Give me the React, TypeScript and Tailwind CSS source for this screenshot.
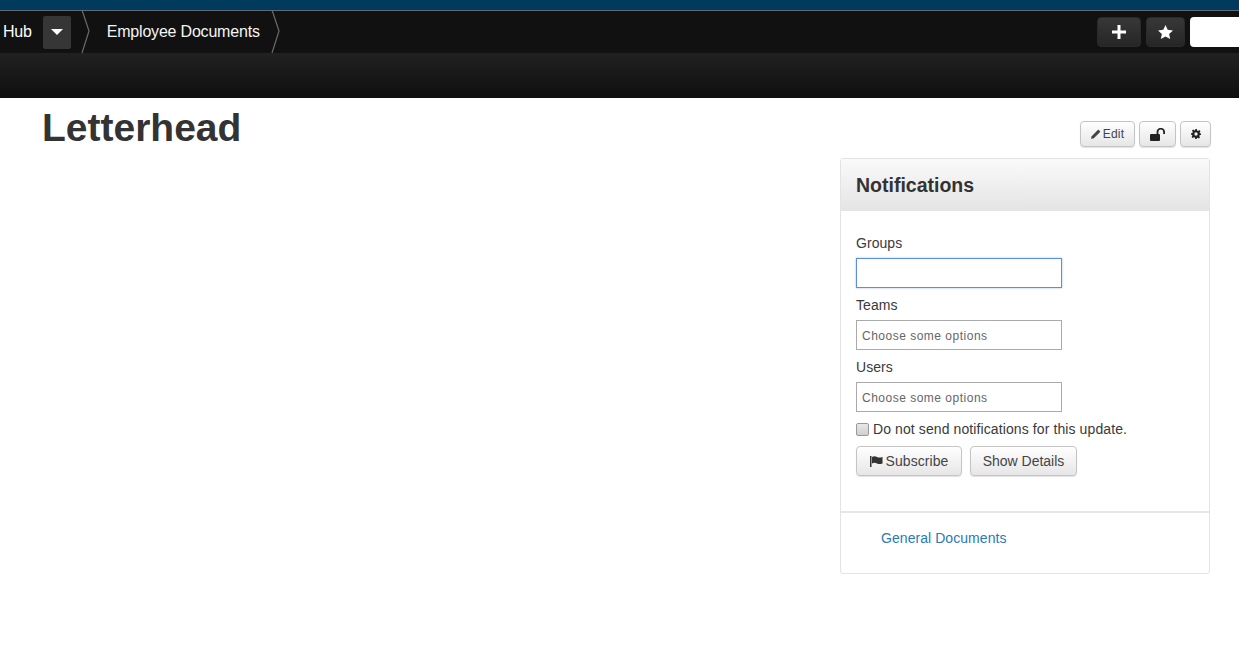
import React from 'react';

const btn = 'flex items-center justify-center rounded-[4px] border border-[#c4c4c4] bg-gradient-to-b from-white to-[#e6e6e6] shadow-[0_1px_1px_rgba(0,0,0,0.12)] text-[#444]';
const navBtn = 'flex h-[30px] items-center justify-center rounded-[4px] border border-[#2a2a2a] bg-gradient-to-b from-[#383838] to-[#262626] text-white';

const Chevron = () => (
  <svg width="9" height="44" viewBox="0 0 9 44" className="shrink-0">
    <path d="M1 0 L8 21 L1 43" fill="none" stroke="#6b6b6b" strokeWidth="1.2" />
  </svg>
);

const SelectField = ({ label, placeholder }: { label: string; placeholder: string }) => (
  <div>
    <div className="mb-[5px] text-[14px] leading-[20px] tracking-[0.06px] text-[#3a3a3a]">{label}</div>
    <div className="flex h-[30px] w-[206px] items-center border border-[#aaa] bg-white pl-[5px] pt-[2px] text-[12px] tracking-[0.5px] text-[#666]">
      {placeholder}
    </div>
  </div>
);

export default function App() {
  return (
    <div className="h-[668px] overflow-hidden bg-white font-['Liberation_Sans',Arial,sans-serif]">
      {/* top strip */}
      <div className="h-[11px] border-b border-[#5f6b70] bg-[#003a5c]" />

      {/* nav row */}
      <div className="flex h-[42px] items-center bg-[#111111] pr-0 text-white">
        <span className="ml-[3px] text-[16px] tracking-[-0.2px]">Hub</span>
        <div className="ml-[11px] flex h-[33px] w-[28px] items-center justify-center rounded-[2px] bg-[#363636]">
          <div className="h-0 w-0 border-x-[6px] border-t-[6px] border-x-transparent border-t-white" />
        </div>
        <div className="ml-[10px]"><Chevron /></div>
        <span className="ml-[17px] text-[16px] tracking-[-0.2px] text-[#f5f5f5]">Employee Documents</span>
        <div className="ml-[11px]"><Chevron /></div>

        <div className="ml-auto flex items-center">
          <div className={`${navBtn} w-[44px]`}>
            <svg width="14" height="14" viewBox="0 0 14 14">
              <path d="M5.5 0h3v5.5H14v3H8.500V14h-3V8.500H0v-3h5.500z" fill="#fff" />
            </svg>
          </div>
          <div className={`${navBtn} ml-[5px] w-[39px]`}>
            <svg width="15" height="14" viewBox="0 0 15 14">
              <path d="M7.500 0l2.200 4.800 5.300.6-3.900 3.500 1.100 5.100-4.700-2.600-4.700 2.600 1.100-5.100L0 5.400l5.300-.6z" fill="#fff" />
            </svg>
          </div>
          <div className="ml-[5px] h-[30px] w-[49px] rounded-l-[4px] bg-white" />
        </div>
      </div>

      {/* sub bar */}
      <div className="h-[45px] bg-gradient-to-b from-[#212121] to-[#0f0f0f]" />

      {/* content */}
      <div className="flex justify-between pl-[42px] pr-[28px]">
        <h1 className="mt-[8px] text-[39px] font-bold leading-[44px] text-[#333]">Letterhead</h1>

        <div className="w-[371px]">
          <div className="mt-[23px] flex justify-end gap-[4px]">
            <div className={`${btn} h-[26px] w-[55px] gap-[2px] text-[12px] tracking-[0.2px]`}>
              <svg width="10" height="10" viewBox="0 0 10 10">
                <path d="M0 10l.7-2.800L7.300.6l2.100 2.100-6.600 6.600z" fill="#444" />
              </svg>
              Edit
            </div>
            <div className={`${btn} h-[26px] w-[37px]`}>
              <svg width="16" height="13" viewBox="0 0 16 13">
                <rect x="0" y="6" width="10" height="7" rx="1" fill="#222" />
                <path d="M7.500 6.500V4a3.300 3.300 0 0 1 6.600 0v2" fill="none" stroke="#222" strokeWidth="1.800" />
              </svg>
            </div>
            <div className={`${btn} h-[26px] w-[31px]`}>
              <svg width="10" height="10" viewBox="0 0 24 24">
                <path d="M10 0h4l.7 3.600 2.200.9 3-2 2.800 2.800-2 3 .9 2.200L24 10v4l-3.400.7-.9 2.200 2 3-2.800 2.800-3-2-2.200.9L14 24h-4l-.7-3.400-2.200-.9-3 2-2.800-2.800 2-3-.9-2.200L0 14v-4l3.400-.7.9-2.200-2-3 2.800-2.800 3 2 2.200-.9zM12 8a4 4 0 1 0 0 8 4 4 0 0 0 0-8z" fill="#222" fillRule="evenodd" />
              </svg>
            </div>
          </div>

          {/* notifications panel */}
          <div className="mt-[11px] mr-[1px] h-[416px] rounded-[3px] border border-[#e3e3e3] bg-white">
            <div className="flex h-[52px] items-center bg-gradient-to-b from-[#fafafa] to-[#e4e4e4] pl-[15px] pt-[2px] text-[19.500px] font-bold text-[#333]">
              Notifications
            </div>

            <div className="px-[15px] pt-[22px]">
              <div className="mb-[5px] text-[14px] leading-[20px] tracking-[0.06px] text-[#3a3a3a]">Groups</div>
              <div className="mb-[7px] h-[30px] w-[206px] border border-[#5b8fd8] bg-white shadow-[0_0_2px_rgba(82,130,210,0.5)]" />
              <SelectField label="Teams" placeholder="Choose some options" />
              <div className="mt-[7px]">
                <SelectField label="Users" placeholder="Choose some options" />
              </div>

              <label className="mt-[7px] flex h-[20px] items-center text-[14px] tracking-[0.1px] text-[#3a3a3a]">
                <span className="h-[13px] w-[13px] rounded-[2px] border border-[#999] bg-gradient-to-b from-[#e8e8e8] to-[#cfcfcf]" />
                <span className="ml-[4px]">Do not send notifications for this update.</span>
              </label>

              <div className="mt-[7px] flex gap-[8px]">
                <div className={`${btn} h-[30px] w-[106px] gap-[3px] text-[14px] tracking-[0.08px]`}>
                  <svg width="13" height="11" viewBox="0 0 13 11">
                    <path d="M0 0h1.500v11H0zM2 1c2-1.200 3.500-.8 5 0s3 .8 5.500 0v6.500c-2.500.8-4 .8-5.500 0s-3-1.200-5 0z" fill="#333" />
                  </svg>
                  Subscribe
                </div>
                <div className={`${btn} h-[30px] w-[107px] text-[14px]`}>Show Details</div>
              </div>
            </div>

            <div className="mt-[35px] border-t-2 border-[#e6e6e6] pl-[40px] pt-[15px] text-[14px] leading-[20px] tracking-[0.06px] text-[#2a7ab5]">
              General Documents
            </div>
          </div>
        </div>
      </div>
    </div>
  );
}
